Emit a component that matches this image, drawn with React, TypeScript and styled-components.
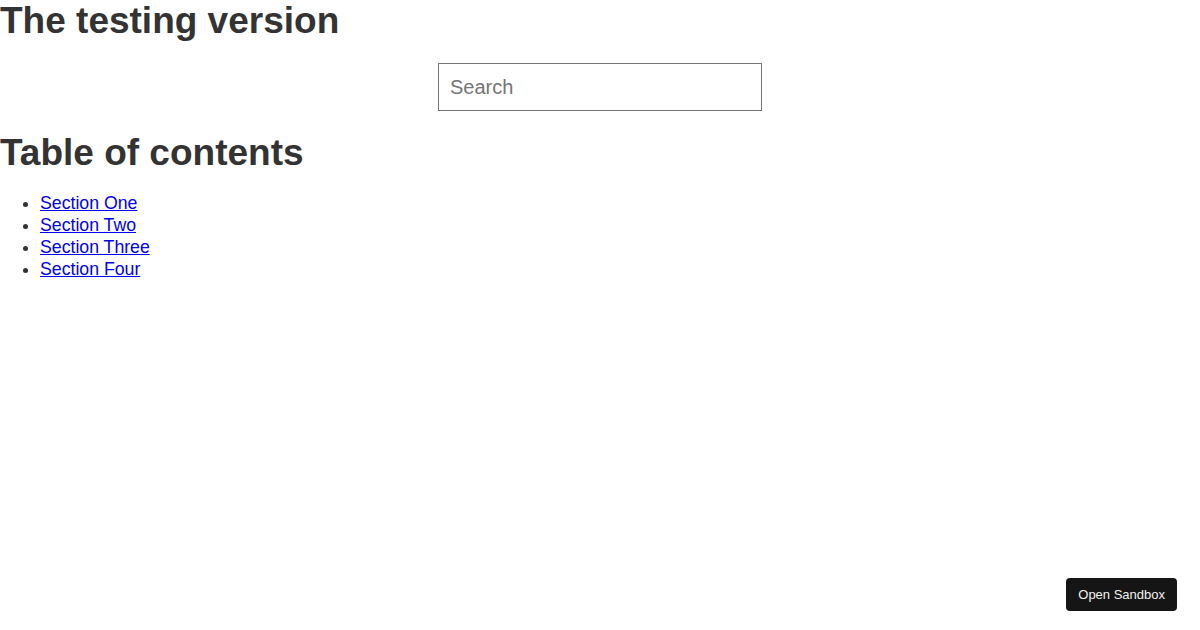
import styled, { createGlobalStyle } from "styled-components";

const GlobalStyle = createGlobalStyle`
  html, body {
    margin: 0;
    padding: 0;
    background: #ffffff;
  }
  body {
    font-family: "Liberation Sans", Arial, Helvetica, sans-serif;
    color: #333333;
  }
`;

const Page = styled.main`
  display: flex;
  flex-direction: column;
`;

const Heading = styled.h1<{ $top?: number }>`
  margin: ${(p) => p.$top ?? 0}px 0 0;
  font-size: 37px;
  line-height: 42px;
  font-weight: 700;
  color: #333333;
`;

const SearchRow = styled.div`
  display: flex;
  justify-content: center;
  margin-top: 21px;
`;

const SearchInput = styled.input`
  box-sizing: border-box;
  width: 324px;
  height: 48px;
  padding: 0 11px;
  border: 1px solid #767676;
  border-radius: 0;
  font-family: "Liberation Sans", Arial, sans-serif;
  font-size: 20px;
  color: #333333;
  outline: none;

  &::placeholder {
    color: #757575;
  }
`;

const Contents = styled.ul`
  margin: 18px 0 0;
  padding-left: 40px;
  font-size: 17.7px;
  line-height: 22px;
`;

const Item = styled.li`
  color: #333333;
`;

const Link = styled.a`
  color: #0000ee;
  text-decoration: underline;
`;

const SandboxButton = styled.button`
  position: fixed;
  right: 23px;
  bottom: 19px;
  height: 33px;
  padding: 0 12px;
  border: none;
  border-radius: 4px;
  background: #151515;
  color: #f2f2f2;
  font-family: "Liberation Sans", Arial, sans-serif;
  font-size: 13px;
  cursor: pointer;
`;

const sections = ["Section One", "Section Two", "Section Three", "Section Four"];

export default function App() {
  return (
    <>
      <GlobalStyle />
      <Page>
        <Heading>The testing version</Heading>
        <SearchRow>
          <SearchInput placeholder="Search" />
        </SearchRow>
        <Heading $top={21}>Table of contents</Heading>
        <Contents>
          {sections.map((s) => (
            <Item key={s}>
              <Link href={`#${s.toLowerCase().replace(/ /g, "-")}`}>{s}</Link>
            </Item>
          ))}
        </Contents>
      </Page>
      <SandboxButton>Open Sandbox</SandboxButton>
    </>
  );
}
